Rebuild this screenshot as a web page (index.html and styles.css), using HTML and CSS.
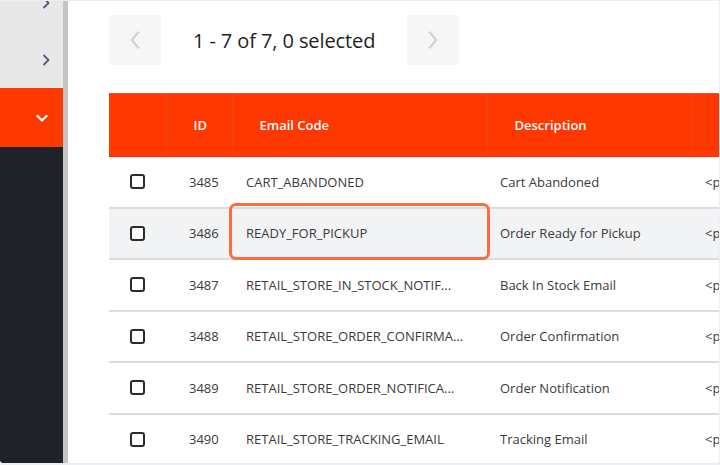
FILE: index.html
```html
<!DOCTYPE html>
<html>
<head>
<meta charset="utf-8">
<link rel="stylesheet" href="styles.css">
</head>
<body>
<div class="frame">
  <nav class="sidebar">
    <div class="nav-item nav-first">
      <svg class="chev-r" width="8" height="12" viewBox="0 0 8 12"><path d="M2 1.5 L6.5 6 L2 10.5" fill="none" stroke="#4f5f78" stroke-width="1.8" stroke-linecap="round" stroke-linejoin="round"/></svg>
    </div>
    <div class="nav-item">
      <svg class="chev-r" width="8" height="12" viewBox="0 0 8 12"><path d="M2 1.5 L6.5 6 L2 10.5" fill="none" stroke="#4f5f78" stroke-width="1.8" stroke-linecap="round" stroke-linejoin="round"/></svg>
    </div>
    <div class="nav-item nav-active">
      <svg class="chev-d" width="12" height="8" viewBox="0 0 12 8"><path d="M1.5 2 L6 6.5 L10.5 2" fill="none" stroke="#ffffff" stroke-width="2.2" stroke-linecap="round" stroke-linejoin="round"/></svg>
    </div>
    <div class="nav-rest"></div>
  </nav>
  <div class="scroll-strip"></div>
  <main class="main">
    <div class="pager">
      <div class="pager-btn">
        <svg width="12" height="18" viewBox="0 0 12 18"><path d="M9 1.5 L3 9 L9 16.5" fill="none" stroke="#d2d2d2" stroke-width="2.4" stroke-linecap="round" stroke-linejoin="round"/></svg>
      </div>
      <div class="pager-label">1 - 7 of 7, 0 selected</div>
      <div class="pager-btn">
        <svg width="12" height="18" viewBox="0 0 12 18"><path d="M3 1.5 L9 9 L3 16.5" fill="none" stroke="#d2d2d2" stroke-width="2.4" stroke-linecap="round" stroke-linejoin="round"/></svg>
      </div>
    </div>
    <table class="grid">
      <colgroup>
        <col class="c-check"><col class="c-id"><col class="c-code"><col class="c-desc"><col class="c-body">
      </colgroup>
      <thead>
        <tr>
          <th></th>
          <th class="th-id">ID</th>
          <th>Email Code</th>
          <th>Description</th>
          <th></th>
        </tr>
      </thead>
      <tbody>
        <tr><td class="td-check"><span class="cb"></span></td><td class="td-id">3485</td><td class="td-code">CART_ABANDONED</td><td>Cart Abandoned</td><td>&lt;p</td></tr>
        <tr class="hl"><td class="td-check"><span class="cb"></span></td><td class="td-id">3486</td><td class="td-code"><span class="mark"></span>READY_FOR_PICKUP</td><td>Order Ready for Pickup</td><td>&lt;p</td></tr>
        <tr><td class="td-check"><span class="cb"></span></td><td class="td-id">3487</td><td class="td-code">RETAIL_STORE_IN_STOCK_NOTIF...</td><td>Back In Stock Email</td><td>&lt;p</td></tr>
        <tr><td class="td-check"><span class="cb"></span></td><td class="td-id">3488</td><td class="td-code">RETAIL_STORE_ORDER_CONFIRMA...</td><td>Order Confirmation</td><td>&lt;p</td></tr>
        <tr><td class="td-check"><span class="cb"></span></td><td class="td-id">3489</td><td class="td-code">RETAIL_STORE_ORDER_NOTIFICA...</td><td>Order Notification</td><td>&lt;p</td></tr>
        <tr><td class="td-check"><span class="cb"></span></td><td class="td-id">3490</td><td class="td-code">RETAIL_STORE_TRACKING_EMAIL</td><td>Tracking Email</td><td>&lt;p</td></tr>
      </tbody>
    </table>
  </main>
</div>
</body>
</html>
```
FILE: styles.css
```css
html, body {
  margin: 0;
  padding: 0;
  background: #eceef2;
}
body {
  width: 720px;
  height: 465px;
  overflow: hidden;
  font-family: "Open Sans", "Noto Sans", sans-serif;
}
.frame {
  margin-top: 1px;
  width: 719px;
  height: 462px;
  display: flex;
  background: #ffffff;
  border-radius: 0 0 3px 4px;
  overflow: hidden;
}
.sidebar {
  width: 63px;
  flex: none;
  display: flex;
  flex-direction: column;
  background: #1f2229;
  overflow: hidden;
}
.nav-item {
  height: 57px;
  flex: none;
  display: flex;
  align-items: center;
  justify-content: flex-end;
  padding-right: 13px;
  background: #e8e8e8;
}
.nav-first {
  margin-top: -27px;
}
.nav-active {
  height: 59px;
  background: #ff3a00;
  padding-right: 15px;
}
.nav-rest {
  flex: 1;
  background: #1f2229;
}
.scroll-strip {
  width: 5px;
  flex: none;
  background: #c5c5c5;
}
.main {
  flex: 1;
  min-width: 0;
  padding-left: 41px;
  overflow: hidden;
}
.pager {
  display: flex;
  align-items: center;
  margin-top: 14px;
  height: 50px;
}
.pager-btn {
  width: 52px;
  height: 50px;
  flex: none;
  background: #f6f6f6;
  border-radius: 3px;
  display: flex;
  align-items: center;
  justify-content: center;
}
.pager-label {
  width: 246px;
  box-sizing: border-box;
  padding-left: 32px;
  font-size: 20px;
  color: #1e1e1e;
  letter-spacing: -0.1px;
  white-space: nowrap;
}
.grid {
  margin-top: 28px;
  border-collapse: collapse;
  table-layout: fixed;
  width: 760px;
  font-size: 13px;
  color: #3a3a3a;
}
.c-check { width: 57px; }
.c-id { width: 66px; }
.c-code { width: 255px; }
.c-desc { width: 205px; }
.c-body { width: 177px; }
.grid thead th {
  height: 62px;
  padding: 0 0 0 27px;
  background: #ff3700;
  color: #ffffff;
  font-weight: 600;
  text-align: left;
  border-top: 1px solid #ff4a3a;
  border-bottom: 1px solid #ff2a10;
  border-left: 1px solid #e9461c;
}
.grid thead th:first-child {
  border-left: none;
}
.grid tbody td {
  height: 49.5px;
  padding: 0 0 0 13px;
  border-bottom: 2px solid #dcdcdc;
  white-space: nowrap;
  overflow: hidden;
}
.grid tbody td.td-code {
  padding-left: 14px;
  position: relative;
  overflow: visible;
}
.grid tbody td.td-id {
  padding-left: 23px;
}
.grid tbody td.td-check {
  padding-left: 21px;
}
.grid tbody tr.hl td {
  background: #f2f3f5;
}
.cb {
  display: block;
  width: 11px;
  height: 11px;
  border: 2px solid #2b2b2b;
  border-radius: 3px;
  background: #fff;
}
.mark {
  position: absolute;
  left: -3px;
  right: -3px;
  top: -6px;
  bottom: -2px;
  border: 3px solid #ff6b3d;
  border-radius: 7px;
  pointer-events: none;
}
```
